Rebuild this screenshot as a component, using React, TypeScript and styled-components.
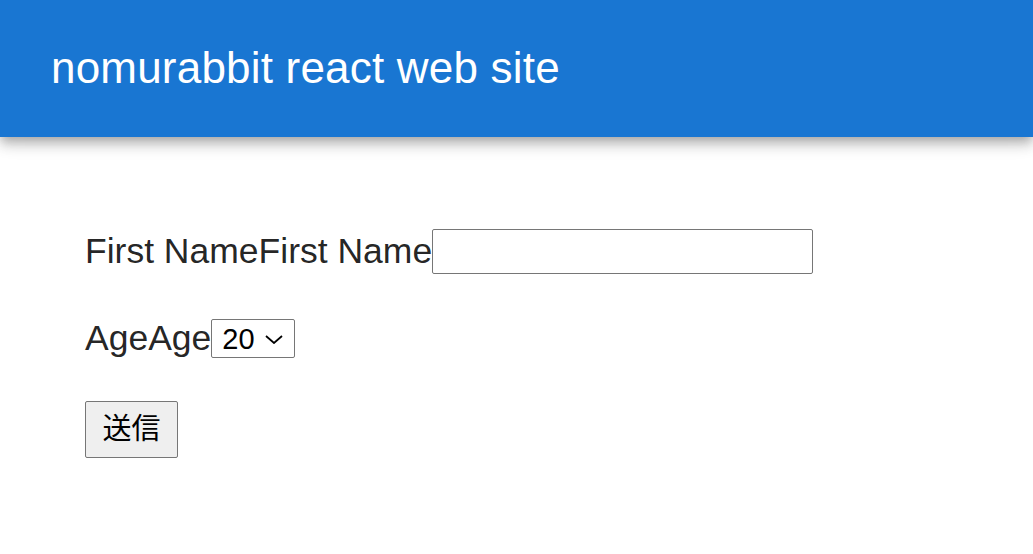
import React, { useState } from "react";
import styled, { createGlobalStyle } from "styled-components";

const GlobalStyle = createGlobalStyle`
  html, body {
    margin: 0;
    padding: 0;
    background: #ffffff;
  }
  body {
    font-family: "Liberation Sans", Arial, "Noto Sans CJK JP", sans-serif;
    color: rgba(0, 0, 0, 0.87);
  }
`;

const AppBar = styled.header`
  display: flex;
  align-items: center;
  height: 137px;
  padding: 0 51px;
  background: #1976d2;
  color: #ffffff;
  box-shadow: 0 4px 9px -2px rgba(0, 0, 0, 0.2), 0 9px 11px 0 rgba(0, 0, 0, 0.14),
    0 2px 22px 0 rgba(0, 0, 0, 0.12);
  position: relative;
  z-index: 1;
`;

const Title = styled.h6`
  margin: 0;
  font-size: 44px;
  font-weight: 400;
  line-height: 1.55;
  letter-spacing: 0.2px;
`;

const Main = styled.main`
  display: flex;
  flex-direction: column;
  align-items: flex-start;
  padding: 92px 85px 0;
`;

const Row = styled.div<{ $height: number; $gap: number }>`
  display: flex;
  align-items: center;
  height: ${(p) => p.$height}px;
  margin-bottom: ${(p) => p.$gap}px;
  font-size: 35.5px;
  line-height: normal;
`;

const Label = styled.label`
  white-space: nowrap;
`;

const TextInput = styled.input`
  box-sizing: border-box;
  width: 381px;
  height: 45px;
  margin: 0;
  padding: 2px 6px;
  border: 1px solid #767676;
  border-radius: 2px;
  font-size: 29px;
  font-family: "Liberation Sans", Arial, sans-serif;
  outline: none;
`;

const SelectWrap = styled.div`
  position: relative;
  display: inline-flex;
`;

const Select = styled.select`
  box-sizing: border-box;
  appearance: none;
  width: 84px;
  height: 39px;
  margin: 0;
  padding: 0 0 0 10px;
  border: 1px solid #767676;
  border-radius: 2px;
  background: #ffffff;
  color: #000000;
  font-size: 29px;
  font-family: "Liberation Sans", Arial, sans-serif;
  outline: none;
`;

const Chevron = styled.svg`
  position: absolute;
  right: 12px;
  top: 16px;
  pointer-events: none;
`;

const SubmitButton = styled.button`
  box-sizing: border-box;
  width: 93px;
  height: 57px;
  margin: 0;
  padding: 0 0 6px;
  border: 1px solid #767676;
  border-radius: 2px;
  background: #efefef;
  color: #000000;
  font-size: 29px;
  font-family: "Noto Sans CJK JP", "Liberation Sans", sans-serif;
  line-height: 1;
`;

const ages = [10, 20, 30, 40, 50, 60];

const App: React.FC = () => {
  const [firstName, setFirstName] = useState("");
  const [age, setAge] = useState("20");

  return (
    <>
      <GlobalStyle />
      <AppBar>
        <Title>nomurabbit react web site</Title>
      </AppBar>
      <Main>
        <Row $height={45} $gap={45}>
          <Label htmlFor="firstName">First NameFirst Name</Label>
          <TextInput
            id="firstName"
            value={firstName}
            onChange={(e) => setFirstName(e.target.value)}
          />
        </Row>
        <Row $height={39} $gap={43}>
          <Label htmlFor="age">AgeAge</Label>
          <SelectWrap>
            <Select id="age" value={age} onChange={(e) => setAge(e.target.value)}>
              {ages.map((a) => (
                <option key={a} value={String(a)}>
                  {a}
                </option>
              ))}
            </Select>
            <Chevron width="18" height="9" viewBox="0 0 18 9">
              <path d="M1 1 L9 8 L17 1" fill="none" stroke="#000" strokeWidth="1.8" />
            </Chevron>
          </SelectWrap>
        </Row>
        <SubmitButton type="submit">送信</SubmitButton>
      </Main>
    </>
  );
};

export default App;
